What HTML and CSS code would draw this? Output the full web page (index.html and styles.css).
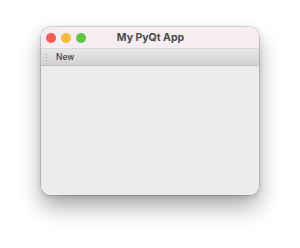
FILE: index.html
```html
<!DOCTYPE html>
<html>
<head>
<meta charset="utf-8">
<link rel="stylesheet" href="styles.css">
</head>
<body>
<div class="window">
  <div class="titlebar">
    <div class="lights">
      <span class="light red"></span>
      <span class="light yellow"></span>
      <span class="light green"></span>
    </div>
    <div class="title">My PyQt App</div>
  </div>
  <div class="toolbar">
    <span class="handle"></span>
    <span class="action">New</span>
  </div>
  <div class="content"></div>
</div>
</body>
</html>
```
FILE: styles.css
```css
html, body {
  margin: 0;
  padding: 0;
  background: #ffffff;
}
body {
  width: 300px;
  height: 248px;
  padding-top: 27px;
  box-sizing: border-box;
  display: flex;
  justify-content: center;
  align-items: flex-start;
  font-family: Inter, "Liberation Sans", Arial, sans-serif;
}
.window {
  width: 218px;
  height: 168px;
  border-radius: 9px;
  overflow: hidden;
  display: flex;
  flex-direction: column;
  background: #ececec;
  box-shadow: 0 0 0 0.5px rgba(0,0,0,0.25), 0 12px 22px rgba(0,0,0,0.33), 0 2px 6px rgba(0,0,0,0.12);
}
.titlebar {
  position: relative;
  height: 21px;
  background: #f5edf2;
  border-bottom: 1px solid #dcd6da;
  display: flex;
  align-items: center;
  justify-content: center;
  flex-shrink: 0;
}
.lights {
  position: absolute;
  left: 5px;
  top: 6px;
  display: flex;
  gap: 5px;
}
.light {
  width: 10px;
  height: 10px;
  border-radius: 50%;
}
.red { background: #ee5e56; }
.yellow { background: #f5bc3a; }
.green { background: #5fc547; }
.title {
  font-size: 10.5px;
  font-weight: 700;
  color: #4b4b4b;
  margin-left: 1px;
}
.toolbar {
  height: 16px;
  background: linear-gradient(#e7e7e7, #d2d2d2);
  border-bottom: 1px solid #c3c3c3;
  display: flex;
  align-items: center;
  flex-shrink: 0;
}
.handle {
  width: 1px;
  height: 7px;
  margin-left: 5px;
  margin-right: 9px;
  background: repeating-linear-gradient(#9a9a9a 0 1px, transparent 1px 3px);
}
.action {
  font-size: 8.5px;
  font-weight: 500;
  color: #3f3f3f;
}
.content {
  flex: 1;
  background: #ececec;
}
```
